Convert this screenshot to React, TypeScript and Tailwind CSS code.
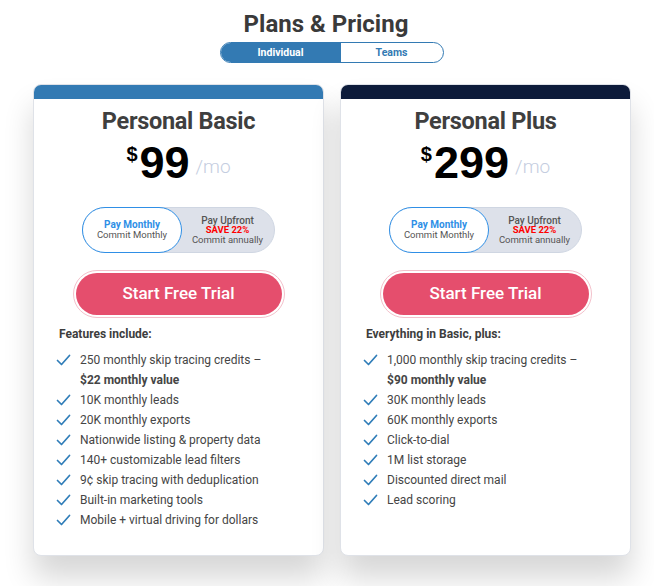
import React, { useState } from 'react';

type Plan = {
  name: string;
  price: string;
  barColor: string;
  heading: string;
  credits: string;
  value: string;
  features: string[];
};

const plans: Plan[] = [
  {
    name: 'Personal Basic',
    price: '99',
    barColor: 'bg-[#337ab3]',
    heading: 'Features include:',
    credits: '250 monthly skip tracing credits –',
    value: '$22 monthly value',
    features: [
      '10K monthly leads',
      '20K monthly exports',
      'Nationwide listing & property data',
      '140+ customizable lead filters',
      '9¢ skip tracing with deduplication',
      'Built-in marketing tools',
      'Mobile + virtual driving for dollars',
    ],
  },
  {
    name: 'Personal Plus',
    price: '299',
    barColor: 'bg-[#0d1b3a]',
    heading: 'Everything in Basic, plus:',
    credits: '1,000 monthly skip tracing credits –',
    value: '$90 monthly value',
    features: [
      '30K monthly leads',
      '60K monthly exports',
      'Click-to-dial',
      '1M list storage',
      'Discounted direct mail',
      'Lead scoring',
    ],
  },
];

const Check = () => (
  <svg width="15" height="12" viewBox="0 0 15 12" className="shrink-0 mt-[4px]">
    <path d="M1.5 6.5 L5.5 10.5 L13.5 1.5" fill="none" stroke="#2f7db8" strokeWidth="1.7" strokeLinecap="round" strokeLinejoin="round" />
  </svg>
);

const PlanCard: React.FC<{ plan: Plan }> = ({ plan }) => {
  const [upfront, setUpfront] = useState(false);
  return (
    <div className="w-[291px] h-[472px] rounded-[8px] bg-white border border-[#dfe2e8] shadow-[0_22px_30px_rgba(0,0,0,0.16)] overflow-hidden flex flex-col">
      <div className={`h-[14px] ${plan.barColor}`} />
      <h2 className="mt-[8px] text-center text-[23.5px] leading-[28px] font-bold text-[#3f3f3f] tracking-[-0.3px]">{plan.name}</h2>
      <div className="mt-[8px] flex items-start justify-center">
        <span className="font-['Liberation_Sans',Arial,sans-serif] font-bold text-[20px] leading-none text-black mt-[1px] mr-[2px]">$</span>
        <span className="font-['Liberation_Sans',Arial,sans-serif] font-bold text-[45px] leading-[40px] text-black">{plan.price}</span>
        <span className="ml-[6px] mt-[14px] text-[19px] leading-none text-[#c4cde0] font-light">/mo</span>
      </div>
      <div className="mt-[24px] mx-auto w-[193px] h-[46px] rounded-full bg-[#dde1ea] border border-[#cfd6e2] flex">
        <button
          onClick={() => setUpfront(false)}
          className={`w-[100px] -m-[1px] h-[46px] rounded-full flex flex-col items-center justify-center leading-[10px] ${upfront ? '' : 'bg-white border border-[#2f8fe6]'}`}
        >
          <span className="text-[10px] font-bold text-[#2f8fe6]">Pay Monthly</span>
          <span className="text-[9.5px] text-[#555]">Commit Monthly</span>
        </button>
        <button
          onClick={() => setUpfront(true)}
          className={`flex-1 h-[44px] rounded-full flex flex-col items-center justify-center leading-[9.5px] ${upfront ? 'bg-white border border-[#2f8fe6]' : ''}`}
        >
          <span className="text-[10px] font-medium text-[#555]">Pay Upfront</span>
          <span className="text-[9.5px] font-bold text-[#ff0000]">SAVE 22%</span>
          <span className="text-[9.5px] text-[#555]">Commit annually</span>
        </button>
      </div>
      <div className="mt-[17px] mx-auto p-[2px] rounded-full border border-[#f3c1cb]">
        <button className="w-[206px] h-[42px] rounded-full bg-[#e54e6d] text-white text-[17px] font-medium">Start Free Trial</button>
      </div>
      <div className="mt-[6px] px-[22px]">
        <p className="text-[12px] leading-[20px] font-bold text-[#3d3d3d] pl-[3px]">{plan.heading}</p>
        <ul className="mt-[6px] text-[12px] leading-[20px] text-[#454545]">
          <li className="flex gap-[9px]">
            <Check />
            <div>
              <div>{plan.credits}</div>
              <div className="font-bold">{plan.value}</div>
            </div>
          </li>
          {plan.features.map((f) => (
            <li key={f} className="flex gap-[9px]">
              <Check />
              <span>{f}</span>
            </li>
          ))}
        </ul>
      </div>
    </div>
  );
};

export default function App() {
  const [tab, setTab] = useState<'individual' | 'teams'>('individual');
  return (
    <div className="w-[654px] h-[586px] overflow-hidden bg-white font-['Roboto',sans-serif]">
      <h1 className="pt-[9px] text-center text-[24px] leading-[30px] font-bold text-[#3a3a3a] pr-[2px]">Plans & Pricing</h1>
      <div className="mt-[3px] flex justify-center">
        <div className="w-[224px] h-[21px] rounded-full border border-[#337ab3] flex overflow-hidden text-[10.5px] font-bold ml-[9px]">
          <button
            onClick={() => setTab('individual')}
            className={`w-[120px] ${tab === 'individual' ? 'bg-[#337ab3] text-white' : 'text-[#337ab3]'}`}
          >
            Individual
          </button>
          <button
            onClick={() => setTab('teams')}
            className={`flex-1 ${tab === 'teams' ? 'bg-[#337ab3] text-white' : 'text-[#337ab3]'}`}
          >
            Teams
          </button>
        </div>
      </div>
      <div className="mt-[21px] pl-[33px] flex gap-[16px]">
        {plans.map((p) => (
          <PlanCard key={p.name} plan={p} />
        ))}
      </div>
    </div>
  );
}
